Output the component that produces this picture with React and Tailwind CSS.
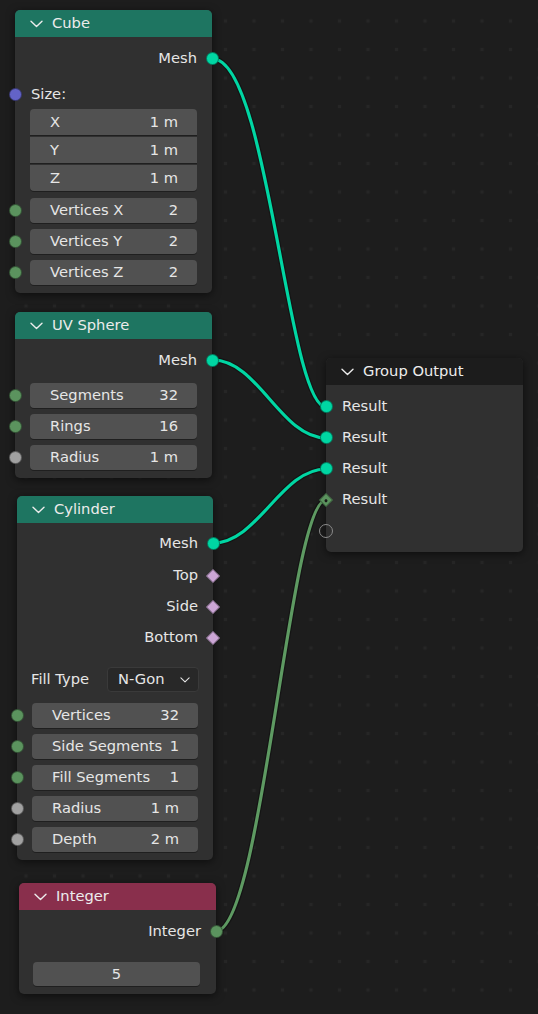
import clsx from 'clsx'

const font = { fontFamily: '"DejaVu Sans", "Liberation Sans", sans-serif' }

const Chevron = ({ className = '' }) => (
  <svg width="13" height="8" viewBox="0 0 13 8" className={className}>
    <path d="M1 1.2 L6.5 6.5 L12 1.2" fill="none" stroke="currentColor" strokeWidth="1.4" strokeLinecap="round" strokeLinejoin="round" />
  </svg>
)

const Socket = ({ side, kind = 'circle', color = '' }) => (
  <span
    className={clsx(
      'absolute top-1/2 -mt-[8px] w-[16px] h-[16px] flex items-center justify-center',
      side === 'left' ? '-left-[8px]' : '-right-[8px]'
    )}
  >
    {kind === 'circle' && <span className={clsx('shrink-0 w-[13px] h-[13px] rounded-full border border-black/40', color)} />}
    {kind === 'diamond' && <span className={clsx('shrink-0 w-[10px] h-[10px] rotate-45 border border-black/30', color)} />}
    {kind === 'field' && (
      <span className={clsx('shrink-0 w-[10px] h-[10px] rotate-45 border border-black/30 flex items-center justify-center', color)}>
        <span className="w-[3px] h-[3px] rounded-full bg-[#1a1a1a]" />
      </span>
    )}
    {kind === 'hollow' && <span className="shrink-0 w-[14px] h-[14px] rounded-full border-[1.5px] border-[#8a8a8a]" />}
  </span>
)

const GEO = 'bg-[#00d6a3]'
const INT = 'bg-[#5b935e]'
const FLOAT = 'bg-[#a1a1a1]'
const VEC = 'bg-[#6363c7]'
const BOOL = 'bg-[#cca6d6]'

const Node = ({ pos, title, header, children }) => (
  <div className={clsx('absolute rounded-[5px] bg-[#303030] shadow-[0_2px_8px_rgba(0,0,0,0.55)] text-[14.7px] text-[#e6e6e6]', pos)}>
    <div className={clsx('h-[27px] rounded-t-[5px] flex items-center pl-[15px] gap-[9px] text-[#ececec]', header)}>
      <Chevron />
      <span>{title}</span>
    </div>
    {children}
  </div>
)

const Output = ({ label, kind = 'circle', color = GEO, h = 'h-[31px]' }) => (
  <div className={clsx('relative flex items-center justify-end pr-[15px]', h)}>
    <span>{label}</span>
    <Socket side="right" kind={kind} color={color} />
  </div>
)

const Field = ({ label, value, rounded = 'rounded-[4px]', h = 'h-[25px]' }) => (
  <div className={clsx('flex items-center justify-between pl-[20px] pr-[19px] bg-[#515151] shadow-[0_1px_0_rgba(0,0,0,0.35)]', rounded, h)}>
    <span>{label}</span>
    <span>{value}</span>
  </div>
)

const InputField = ({ label, value, color }) => (
  <div className="relative h-[31px] flex items-center px-[15px]">
    <Socket side="left" color={color} />
    <div className="flex-1">
      <Field label={label} value={value} />
    </div>
  </div>
)

const Wires = () => (
  <svg className="absolute inset-0" width="538" height="1014">
    <defs>
      <pattern id="grid" x="11.75" y="6.75" width="28.5" height="28.5" patternUnits="userSpaceOnUse">
        <rect x="12.75" y="12.75" width="3" height="3" fill="#262626" />
      </pattern>
    </defs>
    <rect width="538" height="1014" fill="url(#grid)" />
    {[
      ['M213 59 C268 59, 288 407, 326 407', '#00d6a3'],
      ['M213 360 C258 360, 281 438, 326 438', '#00d6a3'],
      ['M213 543 C258 543, 281 469, 326 469', '#00d6a3'],
      ['M216 931 C262 931, 290 500, 326 500', '#5e9a62'],
    ].map(([d, c]) => (
      <g key={d}>
        <path d={d} fill="none" stroke="#141414" strokeWidth="5.5" />
        <path d={d} fill="none" stroke={c} strokeWidth="3.2" />
      </g>
    ))}
  </svg>
)

export default function App() {
  return (
    <div className="relative w-[538px] h-[1014px] bg-[#1d1d1d] overflow-hidden" style={font}>
      <Wires />

      <Node pos="left-[15px] top-[10px] w-[197px]" title="Cube" header="bg-[#1e7561]">
        <div className="pt-[7px] pb-[5px]">
          <Output label="Mesh" h="h-[28px]" />
          <div className="relative h-[28px] mt-[8px] flex items-center pl-[16px]">
            <Socket side="left" color={VEC} />
            <span>Size:</span>
          </div>
          <div className="mx-[15px] mt-[1px] flex flex-col gap-[2px]">
            <Field label="X" value="1 m" h="h-[26px]" rounded="rounded-t-[4px]" />
            <Field label="Y" value="1 m" h="h-[26px]" rounded="rounded-none" />
            <Field label="Z" value="1 m" h="h-[26px]" rounded="rounded-b-[4px]" />
          </div>
          <div className="mt-[4px]">
            <InputField label="Vertices X" value="2" color={INT} />
            <InputField label="Vertices Y" value="2" color={INT} />
            <InputField label="Vertices Z" value="2" color={INT} />
          </div>
        </div>
      </Node>

      <Node pos="left-[15px] top-[312px] w-[197px]" title="UV Sphere" header="bg-[#1e7561]">
        <div className="pt-[7px] pb-[5px]">
          <Output label="Mesh" h="h-[28px]" />
          <div className="mt-[6px]">
            <InputField label="Segments" value="32" color={INT} />
            <InputField label="Rings" value="16" color={INT} />
            <InputField label="Radius" value="1 m" color={FLOAT} />
          </div>
        </div>
      </Node>

      <Node pos="left-[17px] top-[496px] w-[196px]" title="Cylinder" header="bg-[#1e7561]">
        <div className="pt-[6px] pb-[5px]">
          <Output label="Mesh" h="h-[28px]" />
          <div className="mt-[3px]">
            <Output label="Top" kind="diamond" color={BOOL} />
            <Output label="Side" kind="diamond" color={BOOL} />
            <Output label="Bottom" kind="diamond" color={BOOL} />
          </div>
          <div className="mt-[11px] h-[31px] flex items-center justify-between pl-[14px] pr-[14px]">
            <span>Fill Type</span>
            <div className="w-[92px] h-[25px] rounded-[4px] bg-[#282828] border border-[#3a3a3a] flex items-center justify-between pl-[10px] pr-[8px]">
              <span>N-Gon</span>
              <Chevron className="w-[10px] h-[6px]" />
            </div>
          </div>
          <div className="mt-[5px]">
            <InputField label="Vertices" value="32" color={INT} />
            <InputField label="Side Segments" value="1" color={INT} />
            <InputField label="Fill Segments" value="1" color={INT} />
            <InputField label="Radius" value="1 m" color={FLOAT} />
            <InputField label="Depth" value="2 m" color={FLOAT} />
          </div>
        </div>
      </Node>

      <Node pos="left-[19px] top-[883px] w-[197px]" title="Integer" header="bg-[#892f4c]">
        <div className="pt-[7px] pb-[8px]">
          <Output label="Integer" color={INT} h="h-[28px]" />
          <div className="mt-[17px] ml-[14px] mr-[16px]">
            <div className="h-[24px] rounded-[4px] bg-[#515151] shadow-[0_1px_0_rgba(0,0,0,0.35)] flex items-center justify-center">
              5
            </div>
          </div>
        </div>
      </Node>

      <Node pos="left-[326px] top-[358px] w-[197px]" title="Group Output" header="bg-[#1c1c1c]">
        <div className="pt-[6px] pb-[6px]">
          {[GEO, GEO, GEO].map((c, i) => (
            <div key={i} className="relative h-[31px] flex items-center pl-[16px]">
              <Socket side="left" color={c} />
              <span>Result</span>
            </div>
          ))}
          <div className="relative h-[31px] flex items-center pl-[16px]">
            <Socket side="left" kind="field" color={INT} />
            <span>Result</span>
          </div>
          <div className="relative h-[31px]">
            <Socket side="left" kind="hollow" />
          </div>
        </div>
      </Node>
    </div>
  )
}
